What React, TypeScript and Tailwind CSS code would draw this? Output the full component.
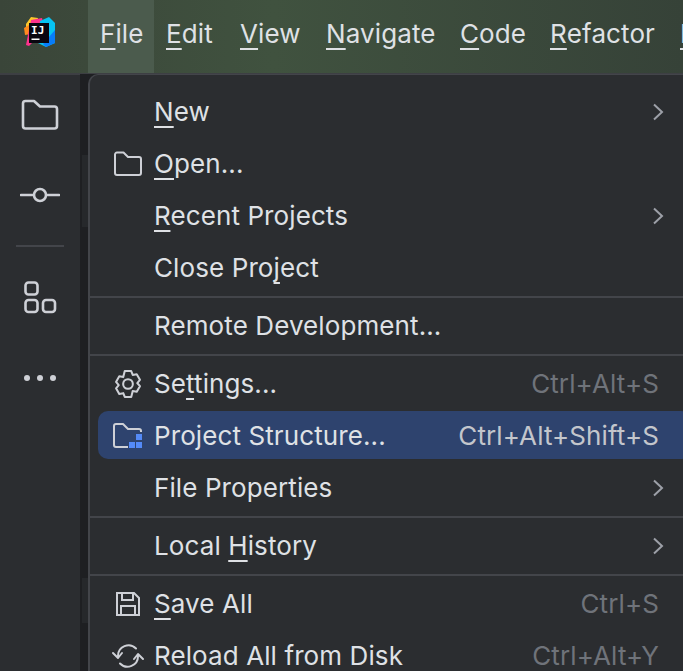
const FONT = "font-['Inter','Noto_Sans',sans-serif]";

type MenuItem = {
  label: string;
  mnemonic?: number;
  shortcut?: string;
  submenu?: boolean;
  active?: boolean;
  icon?: React.ReactNode;
};

const topMenus: { label: string; width: string; active?: boolean }[] = [
  { label: "File", width: "w-[66px]", active: true },
  { label: "Edit", width: "w-[74px]" },
  { label: "View", width: "w-[86px]" },
  { label: "Navigate", width: "w-[134px]" },
  { label: "Code", width: "w-[90px]" },
  { label: "Refactor", width: "w-[130px]" },
  { label: "Build", width: "w-[90px]" },
];

function Mnemonic({ text, index }: { text: string; index?: number }) {
  if (index === undefined) return <>{text}</>;
  return (
    <>
      {text.slice(0, index)}
      <span className="underline decoration-2 underline-offset-[5px]">{text[index]}</span>
      {text.slice(index + 1)}
    </>
  );
}

function Logo() {
  return (
    <svg width="34" height="34" viewBox="0 0 34 34">
      <polygon points="3,8 8,1 15,2 13,14 3,16" fill="#fcc72b" />
      <polygon points="1,12 6,9 8,18 2,19" fill="#ff8a1e" />
      <polygon points="8,4 19,2 22,14 6,30 3,29" fill="#ff318c" />
      <polygon points="17,5 26,1 32,7 32,27 23,31 15,27" fill="#07c3f2" />
      <polygon points="20,28 32,14 32,27 23,31" fill="#087cfa" />
      <rect x="6" y="7" width="20" height="20" fill="#0a0610" />
      <text x="8" y="18" fontSize="11" fontWeight="700" fill="#ffffff" fontFamily="'DejaVu Sans Mono', monospace">IJ</text>
      <rect x="8.500" y="22.500" width="8" height="1.500" fill="#ffffff" />
    </svg>
  );
}

function FolderBig() {
  return (
    <svg width="38" height="32" viewBox="0 0 38 32" fill="none" stroke="#ced0d6" strokeWidth="2.600" strokeLinejoin="round">
      <path d="M2 4.500a2.500 2.500 0 0 1 2.500-2.500h8.500l6 5.500h14.500a2.500 2.500 0 0 1 2.500 2.500v17a2.500 2.500 0 0 1-2.500 2.500h-29a2.500 2.500 0 0 1-2.500-2.500z" />
    </svg>
  );
}

function CommitIcon() {
  return (
    <svg width="40" height="16" viewBox="0 0 40 16" fill="none" stroke="#ced0d6" strokeWidth="2.600" strokeLinecap="round">
      <circle cx="20" cy="8" r="6" />
      <path d="M1 8h12M27 8h12" />
    </svg>
  );
}

function StructureIcon() {
  return (
    <svg width="34" height="34" viewBox="0 0 34 34" fill="none" stroke="#ced0d6" strokeWidth="2.600">
      <rect x="2.500" y="2.500" width="12" height="12" rx="3" />
      <rect x="2.500" y="20" width="12" height="12" rx="3" />
      <rect x="20" y="20" width="12" height="12" rx="3" />
    </svg>
  );
}

function DotsIcon() {
  return (
    <svg width="34" height="8" viewBox="0 0 34 8" fill="#ced0d6">
      <circle cx="4" cy="4" r="3" />
      <circle cx="17" cy="4" r="3" />
      <circle cx="30" cy="4" r="3" />
    </svg>
  );
}

function FolderSmall() {
  return (
    <svg width="30" height="26" viewBox="0 0 30 26" fill="none" stroke="#ced0d6" strokeWidth="2" strokeLinejoin="round">
      <path d="M2 3.500a2 2 0 0 1 2-2h6.500l4.500 4.500h11a2 2 0 0 1 2 2v14a2 2 0 0 1-2 2h-22a2 2 0 0 1-2-2z" />
    </svg>
  );
}

function GearIcon() {
  return (
    <svg width="28" height="28" viewBox="1 1 26 26" fill="none" stroke="#ced0d6" strokeWidth="1.900" strokeLinejoin="round">
      <circle cx="14" cy="14" r="4.500" />
      <path d="M11 2h6l1.400 3.600 3.700-.7 3 5.200-2.500 3 2.500 2.900-3 5.200-3.700-.7L17 26h-6l-1.400-3.500-3.700.7-3-5.200 2.500-2.900-2.500-3 3-5.200 3.700.7z" />
    </svg>
  );
}

function ProjectStructureIcon() {
  return (
    <svg width="32" height="28" viewBox="0 0 32 28" fill="none">
      <path
        d="M16 25H4a2 2 0 0 1-2-2V4a2 2 0 0 1 2-2h7l5 5h11a2 2 0 0 1 2 2v1"
        stroke="#ced0d6"
        strokeWidth="2"
        strokeLinejoin="round"
      />
      <rect x="24" y="12" width="6" height="6" fill="#548af7" />
      <rect x="17" y="20" width="6" height="6" fill="#548af7" />
      <rect x="24" y="20" width="6" height="6" fill="#548af7" />
    </svg>
  );
}

function SaveIcon() {
  return (
    <svg width="26" height="26" viewBox="0 0 26 26" fill="none" stroke="#ced0d6" strokeWidth="2">
      <path d="M2 2h17l5 5v17H2z" />
      <path d="M7 2v7h11V2M6 24v-9h14v9" />
    </svg>
  );
}

function ReloadIcon() {
  return (
    <svg width="34" height="26" viewBox="0 0 34 26" fill="none" stroke="#ced0d6" strokeWidth="2" strokeLinecap="round" strokeLinejoin="round">
      <path d="M7 13A10.500 10.500 0 0 1 25 5.500" />
      <path d="M27 13A10.500 10.500 0 0 1 9 20.500" />
      <path d="M2 10l5 5 4-5" />
      <path d="M23 16l4-5 5 5" />
    </svg>
  );
}

function Chevron() {
  return (
    <svg width="12" height="18" viewBox="0 0 12 18" fill="none" stroke="#9da0a8" strokeWidth="2" className="mr-[-5px]">
      <path d="M2 1.500L10 9l-8 7.500" />
    </svg>
  );
}

function Row({ item }: { item: MenuItem }) {
  return (
    <div className="h-[52px] pt-[1px] pb-[3px] pl-[8px] shrink-0">
      <div
        className={`h-full flex items-center rounded-[10px] pl-3 pr-[32px] pt-[2px] ${item.active ? "bg-[#2e436e]" : ""}`}
      >
        <div className="w-9 mr-[8px] flex items-center justify-center shrink-0">{item.icon}</div>
        <span className="text-[#dfe1e5]">
          <Mnemonic text={item.label} index={item.mnemonic} />
        </span>
        <div className="ml-auto flex items-center">
          {item.shortcut && (
            <span className={item.active ? "text-[#c3c6cc]" : "text-[#6f737a]"}>{item.shortcut}</span>
          )}
          {item.submenu && <Chevron />}
        </div>
      </div>
    </div>
  );
}

function Separator() {
  return (
    <div className="h-[6px] flex items-center shrink-0">
      <div className="h-[2px] w-full bg-[#43454a]" />
    </div>
  );
}

const groups: MenuItem[][] = [
  [
    { label: "New", mnemonic: 0, submenu: true },
    { label: "Open...", mnemonic: 0, icon: <FolderSmall /> },
    { label: "Recent Projects", mnemonic: 0, submenu: true },
    { label: "Close Project", mnemonic: 9 },
  ],
  [{ label: "Remote Development..." }],
  [
    { label: "Settings...", mnemonic: 2, shortcut: "Ctrl+Alt+S", icon: <GearIcon /> },
    { label: "Project Structure...", shortcut: "Ctrl+Alt+Shift+S", active: true, icon: <ProjectStructureIcon /> },
    { label: "File Properties", submenu: true },
  ],
  [{ label: "Local History", mnemonic: 6, submenu: true }],
  [
    { label: "Save All", mnemonic: 0, shortcut: "Ctrl+S", icon: <SaveIcon /> },
    { label: "Reload All from Disk", shortcut: "Ctrl+Alt+Y", icon: <ReloadIcon /> },
  ],
];

export default function App() {
  return (
    <div className={`w-[683px] h-[671px] overflow-hidden flex flex-col bg-[#1e1f22] text-[26px] leading-[32px] tracking-[0.1px] ${FONT}`}>
      {/* Title bar */}
      <div className="h-[73px] shrink-0 flex bg-gradient-to-r from-[#3a4539] via-[#40523f] via-40% to-[#364238]">
        <div className="w-[88px] shrink-0 pl-[23px] pt-[16px]">
          <Logo />
        </div>
        <div className="flex">
          {topMenus.map((m) => (
            <div
              key={m.label}
              className={`h-full shrink-0 flex items-center pb-[5px] pl-[12px] text-[#dfe1e5] ${m.width} ${m.active ? "bg-[#4b5b4d]" : ""}`}
            >
              <Mnemonic text={m.label} index={0} />
            </div>
          ))}
        </div>
      </div>

      <div className="h-[1px] shrink-0 bg-[#3d3f43]" />

      <div className="flex flex-1 min-h-0">
        {/* Tool window stripe */}
        <div className="w-[80px] shrink-0 bg-[#2b2d30] border-t border-[#3d3f43] flex flex-col items-center">
          <div className="mt-[24px]">
            <FolderBig />
          </div>
          <div className="mt-[56px]">
            <CommitIcon />
          </div>
          <div className="mt-[42px] w-[48px] h-[2px] bg-[#43454a]" />
          <div className="mt-[33px]">
            <StructureIcon />
          </div>
          <div className="mt-[60px]">
            <DotsIcon />
          </div>
        </div>

        {/* Gap with traces of the editor behind the menu */}
        <div className="w-[8px] shrink-0 flex flex-col">
          <div className="h-[81px]" />
          <div className="h-[72px] ml-[2px] bg-[#26282b]" />
          <div className="h-[351px]" />
          <div className="h-[45px] ml-[2px] bg-[#26282b]" />
        </div>

        {/* File menu */}
        <div className="w-[603px] shrink-0 bg-[#2b2d30] border-l-2 border-t border-[#43454a] rounded-tl-[10px] pt-[11px] flex flex-col">
          {groups.map((group, i) => (
            <div key={i} className="flex flex-col shrink-0">
              {i > 0 && <Separator />}
              {group.map((item) => (
                <Row key={item.label} item={item} />
              ))}
            </div>
          ))}
        </div>
      </div>
    </div>
  );
}
